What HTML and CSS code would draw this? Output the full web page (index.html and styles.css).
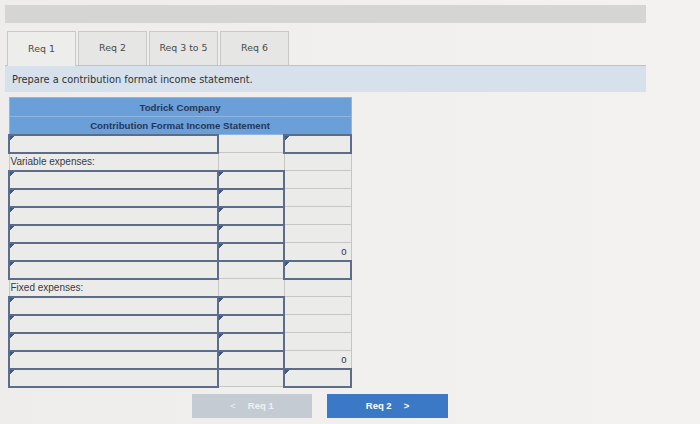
FILE: index.html
```html
<!DOCTYPE html>
<html>
<head>
<meta charset="utf-8">
<link rel="stylesheet" href="styles.css">
</head>
<body>
<div class="page">
  <div class="topbar"></div>
  <div class="tabs">
    <div class="tab active">Req 1</div>
    <div class="tab">Req 2</div>
    <div class="tab">Req 3 to 5</div>
    <div class="tab">Req 6</div>
  </div>
  <div class="instr">Prepare a contribution format income statement.</div>
  <table class="stmt">
    <colgroup><col class="c1"><col class="c2"><col class="c3"></colgroup>
    <tr class="h1"><th colspan="3">Todrick Company</th></tr>
    <tr class="h2"><th colspan="3">Contribution Format Income Statement</th></tr>
    <tr><td class="in"></td><td></td><td class="in"></td></tr>
    <tr><td class="lbl">Variable expenses:</td><td></td><td></td></tr>
    <tr><td class="in"></td><td class="in"></td><td></td></tr>
    <tr><td class="in"></td><td class="in"></td><td></td></tr>
    <tr><td class="in"></td><td class="in"></td><td></td></tr>
    <tr><td class="in"></td><td class="in"></td><td></td></tr>
    <tr><td class="in"></td><td class="in"></td><td class="num">0</td></tr>
    <tr><td class="in"></td><td></td><td class="in"></td></tr>
    <tr><td class="lbl">Fixed expenses:</td><td></td><td></td></tr>
    <tr><td class="in"></td><td class="in"></td><td></td></tr>
    <tr><td class="in"></td><td class="in"></td><td></td></tr>
    <tr><td class="in"></td><td class="in"></td><td></td></tr>
    <tr><td class="in"></td><td class="in"></td><td class="num">0</td></tr>
    <tr><td class="in"></td><td></td><td class="in"></td></tr>
  </table>
  <div class="nav">
    <div class="btn prev"><span class="chev">&lt;</span>Req 1</div>
    <div class="btn next">Req 2<span class="chev r">&gt;</span></div>
  </div>
</div>
</body>
</html>
```

FILE: styles.css
```css
html, body {
  margin: 0;
  padding: 0;
  background: #efeeec;
}
.page {
  width: 700px;
  height: 424px;
  padding-top: 5px;
  box-sizing: border-box;
  background: linear-gradient(90deg, #eeedeb 0%, #f1f0ee 60%, #f3f2f0 100%);
  overflow: hidden;
}
.topbar {
  margin-left: 5px;
  width: 641px;
  height: 18px;
  background: #d5d5d3;
}
.tabs {
  display: flex;
  gap: 2px;
  margin-left: 7px;
  margin-top: 8px;
  height: 34px;
}
.tab {
  width: 69px;
  box-sizing: border-box;
  border: 1px solid #c9c9c7;
  border-bottom: none;
  background: #e6e6e4;
  font-family: "DejaVu Sans", Verdana, sans-serif;
  font-size: 9.4px;
  color: #4a4a4a;
  display: flex;
  align-items: center;
  justify-content: center;
  padding-bottom: 2px;
}
.tab.active {
  background: #ededeb;
  height: 35px;
}
.instr {
  margin-left: 5px;
  width: 641px;
  height: 27px;
  box-sizing: border-box;
  border-top: 1px solid #bfc3c7;
  background: #d6e1eb;
  font-family: "DejaVu Sans", Verdana, sans-serif;
  font-size: 9.8px;
  color: #333;
  padding: 8px 0 0 7px;
}
.stmt {
  margin-top: 5px;
  margin-left: 8px;
  border-collapse: collapse;
  width: 342px;
  table-layout: fixed;
  font-family: "Liberation Sans", Arial, sans-serif;
}
.c1 { width: 209px; }
.c2 { width: 66px; }
.c3 { width: 67px; }
.stmt th {
  background: #6b9fd8;
  color: #26365a;
  font-size: 9.7px;
  font-weight: bold;
  padding: 0;
  border: 1px solid #8fb6e2;
}
.h1 th { height: 18px; }
.h2 th { height: 16px; }
.stmt tr { height: 18px; }
.stmt td {
  height: 14px;
  padding: 0;
  border: 1px solid #c6c6c4;
  background: #ebebe9;
  font-size: 10px;
  color: #333;
}
.stmt td.in {
  border: 2px solid #5d6c88;
  background: linear-gradient(135deg, #3b5a8e 0, #3b5a8e 3px, transparent 3px) no-repeat, #ebebe9;
  background-size: 5px 6px, auto;
}
.stmt td.lbl {
  padding-left: 1px;
  color: #3a3a3a;
}
.stmt td.num {
  text-align: right;
  padding-right: 4px;
  font-size: 9.5px;
}
.nav {
  display: flex;
  gap: 15px;
  margin-left: 192px;
  margin-top: 6px;
}
.btn {
  width: 120px;
  height: 24px;
  display: flex;
  align-items: center;
  justify-content: center;
  font-family: "Liberation Sans", Arial, sans-serif;
  font-size: 9.5px;
  font-weight: bold;
  color: #fff;
}
.btn.prev {
  background: #c4cbd2;
  color: #eef1f4;
}
.btn.next {
  width: 121px;
  background: #3b78c6;
}
.chev {
  margin-right: 12px;
  font-weight: normal;
}
.chev.r {
  margin-right: 0;
  margin-left: 12px;
  font-weight: bold;
}
```
